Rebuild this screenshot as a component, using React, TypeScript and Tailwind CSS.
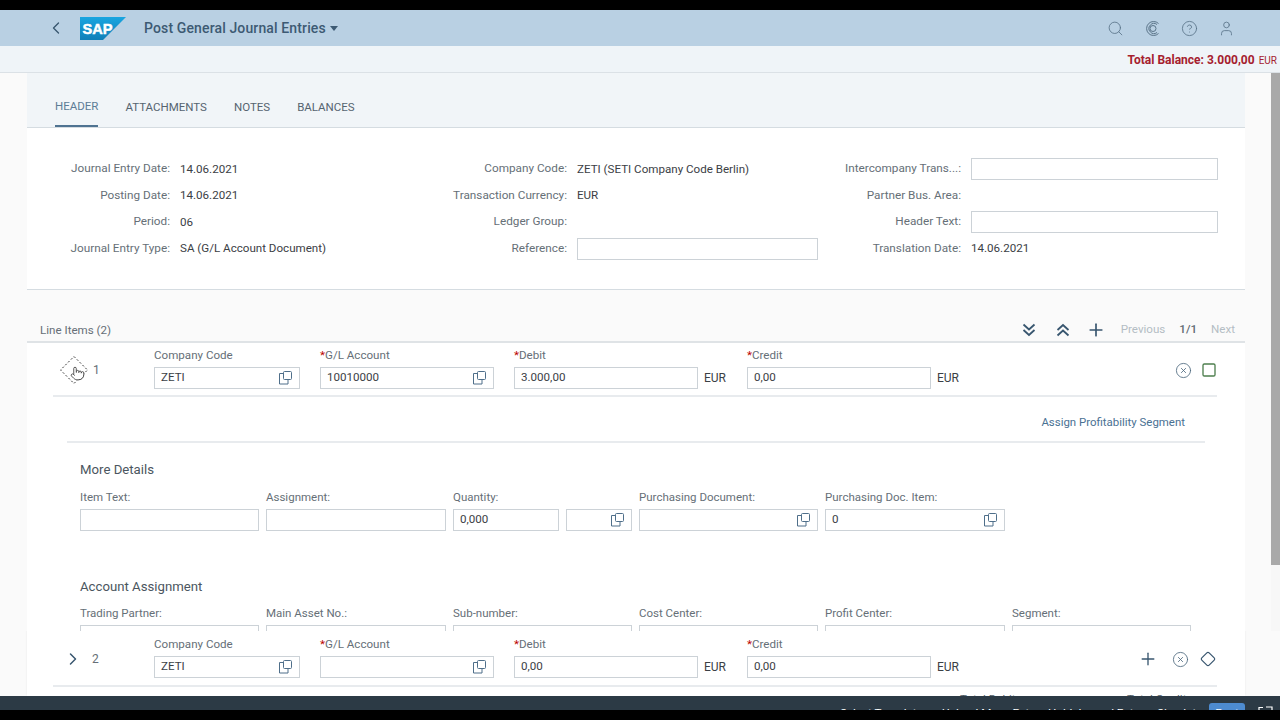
import React from 'react';
import { ChevronLeft, ChevronRight, Plus, Search, CircleHelp, User, CircleX, Square, Diamond, Pointer } from 'lucide-react';

const font = 'font-["Roboto","Liberation_Sans",sans-serif]';

const CopyIcon: React.FC = () => (
    <svg width="14" height="14" viewBox="0 0 14 14" fill="none" stroke="#4f6f8a" strokeWidth="1" className="shrink-0">
        <path d="M5.5 2.5H1.5V13H10V8.5" />
        <rect x="5.5" y="0.5" width="8" height="8" rx="1" />
    </svg>
);

const DoubleChevron: React.FC<{ up?: boolean; className?: string }> = ({ up, className }) => (
    <svg width="14" height="14" viewBox="0 0 14 14" fill="none" stroke="#38566f" strokeWidth="1.8" className={className}>
        {up ? <path d="M1.5 7 7 2l5.5 5M1.5 12.5 7 7.5l5.5 5" /> : <path d="M1.5 1.5 7 6.5l5.5-5M1.5 7 7 12l5.5-5" />}
    </svg>
);

const Input: React.FC<{ value?: string; width: string; help?: boolean }> = ({ value, width, help }) => (
    <div className={`${width} h-[22px] shrink-0 bg-white border border-[#ccd2d7] flex items-center justify-between pl-[6px] pr-[7px] text-[11.6px] text-[#3b4045]`}>
        <span>{value}</span>
        {help && <CopyIcon />}
    </div>
);

const HeaderField: React.FC<{ label: string; labelW: string; value?: string; children?: React.ReactNode }> = ({ label, labelW, value, children }) => (
    <div className="h-[26.5px] flex items-center gap-[10px]">
        <div className={`${labelW} shrink-0 whitespace-nowrap text-right text-[#666f77] text-[11.75px]`}>{label}</div>
        {children ?? <div className="text-[#3b4045] text-[11.6px]">{value}</div>}
    </div>
);

const Stacked: React.FC<{ label: string; req?: boolean; width: string; value?: string; help?: boolean; unit?: boolean; gap?: string }> = ({ label, req, width, value, help, unit, gap }) => (
    <div className={`flex flex-col shrink-0 ${gap ?? ''}`}>
        <div className="h-[21px] text-[11.6px] leading-[18px] text-[#666f77] whitespace-nowrap">
            {req && <span className="text-[#b00]">*</span>}
            {label}
        </div>
        <div className="flex items-center">
            <Input width={width} value={value} help={help} />
            {unit && <span className="ml-[6px] w-[27px] text-[12px] text-[#3b4045]">EUR</span>}
        </div>
    </div>
);

const LineFields: React.FC<{ account?: string; debit: string }> = ({ account, debit }) => (
    <div className="flex">
        <Stacked label="Company Code" width="w-[146px]" value="ZETI" help gap="mr-[20px]" />
        <Stacked label="G/L Account" req width="w-[174px]" value={account} help gap="mr-[20px]" />
        <Stacked label="Debit" req width="w-[184px]" value={debit} unit gap="mr-[16px]" />
        <Stacked label="Credit" req width="w-[184px]" value="0,00" unit />
    </div>
);

const SubLabel: React.FC<{ label: string; width: string }> = ({ label, width }) => (
    <div className={`${width} mr-[7px] shrink-0 text-[11.5px] leading-[18px] text-[#666f77]`}>{label}</div>
);

export default function App() {
    return (
        <div className={`w-[1280px] h-[720px] overflow-hidden flex flex-col bg-black ${font}`}>
            <div className="h-[10px] shrink-0 bg-black" />

            {/* shell bar */}
            <div className="h-[36px] shrink-0 bg-[#b9d0e3] flex items-center">
                <ChevronLeft size={20} strokeWidth={1.6} className="ml-[46px] text-[#38566f]" />
                <svg width="46" height="23" viewBox="0 0 46 23" className="ml-[14px]">
                    <defs>
                        <linearGradient id="sapg" x1="0" y1="0" x2="0" y2="1">
                            <stop offset="0" stopColor="#19a5e0" />
                            <stop offset="1" stopColor="#0f7fb8" />
                        </linearGradient>
                    </defs>
                    <polygon points="0,0 46,0 23,23 0,23" fill="url(#sapg)" />
                    <text x="2.5" y="16.5" fontSize="15" fontWeight="800" fill="#fff" stroke="#fff" strokeWidth="0.5" fontFamily="Liberation Sans" textLength="30" lengthAdjust="spacingAndGlyphs">SAP</text>
                </svg>
                <div className="ml-[18px] text-[14px] tracking-[0.13px] font-medium text-[#3d5a73]">Post General Journal Entries</div>
                <div className="ml-[4px] w-0 h-0 border-l-[4px] border-r-[4px] border-t-[5px] border-l-transparent border-r-transparent border-t-[#3d5a73]" />
                <div className="ml-auto mr-[45px] flex items-center gap-[20px] text-[#5a7489]">
                    <Search size={17} strokeWidth={1.2} />
                    <svg width="17" height="17" viewBox="0 0 17 17" fill="none" stroke="currentColor" strokeWidth="1">
                        <path d="M14.5 13.5a7 7 0 1 1 0-10" />
                        <path d="M13 12.5a5 5 0 1 1 0-8" />
                        <circle cx="9" cy="8.5" r="3" />
                    </svg>
                    <CircleHelp size={17} strokeWidth={1.2} />
                    <User size={17} strokeWidth={1.2} />
                </div>
            </div>

            {/* total balance */}
            <div className="h-[27px] shrink-0 pt-[2px] bg-[#eff4f8] border-b border-[#dbe1e6] flex items-center justify-end pr-[3px]">
                <span className="text-[12px] font-bold text-[#a5202e]">Total Balance: 3.000,00</span>
                <span className="ml-[4px] text-[10px] text-[#a5202e]">EUR</span>
            </div>

            {/* scrolling page */}
            <div className="h-[558px] shrink-0 overflow-hidden bg-[#fafafa] flex">
                <div className="w-[1271px] shrink-0 pl-[27px] pr-[26px]">
                    <div className="h-[55px] bg-[#f1f5f8] border-b border-[#d5dce1] flex items-end pl-[28px] gap-[27px] text-[11.5px] text-[#566470]">
                        <div className="h-[55px] pt-[16px] flex items-center border-b-2 border-[#4f7391] text-[#5d7c96]">HEADER</div>
                        <div className="h-[55px] pt-[16px] flex items-center">ATTACHMENTS</div>
                        <div className="h-[55px] pt-[16px] flex items-center">NOTES</div>
                        <div className="h-[55px] pt-[16px] flex items-center">BALANCES</div>
                    </div>

                    {/* header form */}
                    <div className="h-[162px] bg-white border-b border-[#d5dce1] pt-[28px] flex">
                        <div className="w-[343px] shrink-0">
                            <HeaderField labelW="w-[143px]" label="Journal Entry Date:" value="14.06.2021" />
                            <HeaderField labelW="w-[143px]" label="Posting Date:" value="14.06.2021" />
                            <HeaderField labelW="w-[143px]" label="Period:" value="06" />
                            <HeaderField labelW="w-[143px]" label="Journal Entry Type:" value="SA (G/L Account Document)" />
                        </div>
                        <div className="w-[470px] shrink-0">
                            <HeaderField labelW="w-[197px]" label="Company Code:" value="ZETI (SETI Company Code Berlin)" />
                            <HeaderField labelW="w-[197px]" label="Transaction Currency:" value="EUR" />
                            <HeaderField labelW="w-[197px]" label="Ledger Group:" />
                            <HeaderField labelW="w-[197px]" label="Reference:">
                                <Input width="w-[241px]" />
                            </HeaderField>
                        </div>
                        <div className="flex-1">
                            <HeaderField labelW="w-[121px]" label="Intercompany Trans...:">
                                <Input width="w-[247px]" />
                            </HeaderField>
                            <HeaderField labelW="w-[121px]" label="Partner Bus. Area:" />
                            <HeaderField labelW="w-[121px]" label="Header Text:">
                                <Input width="w-[247px]" />
                            </HeaderField>
                            <HeaderField labelW="w-[121px]" label="Translation Date:" value="14.06.2021" />
                        </div>
                    </div>

                    {/* line items toolbar */}
                    <div className="h-[53px] border-b-2 border-[#dfe3e6] flex items-end pb-[1px] pl-[13px] pr-[10px]">
                        <span className="mb-[1px] text-[11.6px] text-[#666f77]">Line Items (2)</span>
                        <div className="ml-auto flex items-center">
                            <DoubleChevron />
                            <DoubleChevron up className="ml-[20px]" />
                            <Plus size={20} strokeWidth={2} className="ml-[16px] text-[#38566f]" />
                            <span className="ml-[15px] text-[11.6px] text-[#b4bdc4]">Previous</span>
                            <span className="ml-[14px] text-[11.6px] font-medium text-[#5f6a72]">1/1</span>
                            <span className="ml-[14px] text-[11.6px] text-[#b4bdc4]">Next</span>
                        </div>
                    </div>

                    {/* item 1 */}
                    <div className="bg-white">
                        <div className="ml-[26px] mr-[28px] h-[54px] border-b-2 border-[#e8ebee] flex items-start">
                            <div className="w-[101px] shrink-0 flex items-center h-[54px] relative">
                                <svg width="30" height="30" viewBox="0 0 30 30" fill="none" stroke="#3a3a3a" strokeWidth="1" strokeDasharray="2 2" className="ml-[6px]">
                                    <path d="M15 1.5 28.5 15 15 28.5 1.5 15Z" />
                                </svg>
                                <Pointer size={15} strokeWidth={1.3} className="absolute left-[17px] top-[23px] text-[#333] fill-white" />
                                <span className="ml-[4px] text-[12px] text-[#666f77]">1</span>
                            </div>
                            <div className="pt-[3px]">
                                <LineFields account="10010000" debit="3.000,00" />
                            </div>
                            <div className="ml-auto h-[54px] flex items-center gap-[9px]">
                                <CircleX size={17} strokeWidth={1.2} className="text-[#4f6a80]" />
                                <Square size={16} strokeWidth={2} className="text-[#4e7f4e]" />
                            </div>
                        </div>

                        <div className="mx-[40px] h-[46px] pt-[7px] border-b-2 border-[#e8ebee] flex items-center justify-end pr-[20px]">
                            <span className="text-[11.45px] text-[#4a7193]">Assign Profitability Segment</span>
                        </div>

                        <div className="pl-[53px] pt-[18px] h-[135px]">
                            <div className="text-[13.2px] leading-[18px] text-[#4b5660]">More Details</div>
                            <div className="flex mt-[9px]">
                                <SubLabel label="Item Text:" width="w-[179px]" />
                                <SubLabel label="Assignment:" width="w-[180px]" />
                                <SubLabel label="Quantity:" width="w-[179px]" />
                                <SubLabel label="Purchasing Document:" width="w-[179px]" />
                                <SubLabel label="Purchasing Doc. Item:" width="w-[180px]" />
                            </div>
                            <div className="flex mt-[3px]">
                                <Input width="w-[179px] mr-[7px]" />
                                <Input width="w-[180px] mr-[7px]" />
                                <Input width="w-[106px] mr-[7px]" value="0,000" />
                                <Input width="w-[66px] mr-[7px]" help />
                                <Input width="w-[179px] mr-[7px]" help />
                                <Input width="w-[180px]" value="0" help />
                            </div>
                        </div>

                        <div className="pl-[53px]">
                            <div className="text-[13.2px] leading-[18px] text-[#4b5660]">Account Assignment</div>
                            <div className="flex mt-[8px]">
                                <SubLabel label="Trading Partner:" width="w-[179px]" />
                                <SubLabel label="Main Asset No.:" width="w-[180px]" />
                                <SubLabel label="Sub-number:" width="w-[179px]" />
                                <SubLabel label="Cost Center:" width="w-[179px]" />
                                <SubLabel label="Profit Center:" width="w-[180px]" />
                                <SubLabel label="Segment:" width="w-[180px]" />
                            </div>
                            <div className="flex mt-[3px]">
                                <Input width="w-[179px] mr-[7px]" />
                                <Input width="w-[180px] mr-[7px]" />
                                <Input width="w-[179px] mr-[7px]" />
                                <Input width="w-[179px] mr-[7px]" />
                                <Input width="w-[180px] mr-[7px]" />
                                <Input width="w-[179px]" />
                            </div>
                        </div>
                    </div>
                </div>
                <div className="w-[9px] shrink-0 bg-[#f7f7f7]">
                    <div className="h-[492px] bg-[#a9a9a9]" />
                </div>
            </div>

            {/* item 2 sticky row */}
            <div className="h-[65px] shrink-0 bg-[#fafafa] pl-[27px] overflow-hidden">
                <div className="w-[1218px] h-[65px] bg-white shadow-[0_-1px_2px_rgba(0,0,0,0.08)]">
                    <div className="ml-[26px] mr-[28px] h-[56px] border-b-2 border-[#e8ebee] flex items-start">
                        <div className="w-[101px] shrink-0 flex items-center h-[56px]">
                            <ChevronRight size={20} strokeWidth={1.8} className="ml-[10px] text-[#38566f]" />
                            <span className="ml-[9px] text-[12px] text-[#666f77]">2</span>
                        </div>
                        <div className="pt-[4px]">
                            <LineFields debit="0,00" />
                        </div>
                        <div className="ml-auto mr-[1px] h-[56px] flex items-center">
                            <Plus size={20} strokeWidth={1.6} className="text-[#38566f]" />
                            <CircleX size={17} strokeWidth={1.2} className="ml-[14px] text-[#4f6a80]" />
                            <Diamond size={16} strokeWidth={1.8} className="ml-[11px] text-[#38566f]" />
                        </div>
                    </div>
                    {/* totals row, only the tops of the letters show above the footer */}
                    <div className="h-[9px] overflow-hidden pt-[5px] flex text-[11.6px] leading-[14px] text-[#555f68]">
                        <span className="ml-[933px] w-[167px]">Total Debit:</span>
                        <span>Total Credit:</span>
                    </div>
                </div>
            </div>

            {/* footer bar, cut off by the video frame */}
            <div className="h-[14px] shrink-0 bg-[#2c3a45] flex overflow-hidden relative">
                <div className="ml-[840px] pt-[9px] flex text-[11.6px] leading-[16px] text-white">
                    <span className="w-[102px]">Select Template</span>
                    <span className="w-[106px]">Upload Mass Entry</span>
                    <span className="w-[109px]">Hold Journal Entry</span>
                    <span>Simulate</span>
                </div>
                <div className="absolute left-[1209px] top-[7px] w-[36px] h-[20px] rounded-t-[3px] bg-[#4d8bd0] pt-[2px] text-center text-[11.6px] leading-[16px] text-white">Post</div>
                <svg width="15" height="15" viewBox="0 0 15 15" fill="none" stroke="#fff" strokeWidth="1.2" className="absolute left-[1258px] top-[10px]">
                    <path d="M5 1.5H1V14H13V10M8 1H14V7" />
                </svg>
            </div>
            <div className="h-[10px] shrink-0 bg-black" />
        </div>
    );
}
